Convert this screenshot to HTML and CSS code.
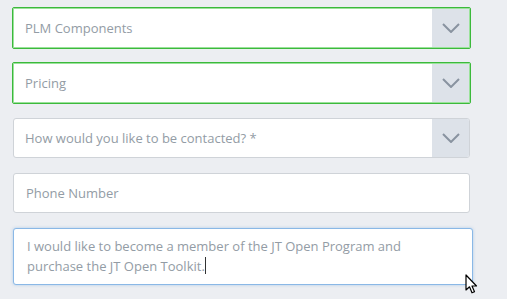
FILE: index.html
```html
<!DOCTYPE html>
<html lang="en">
<head>
    <meta charset="UTF-8">
    <meta name="viewport" content="width=device-width, initial-scale=1.0">
    <title>Contact Form</title>
    <link rel="stylesheet" href="styles.css">
</head>
<body>
    <form class="contact-form">
        <div class="field select-field valid">
            <span class="field-text">PLM Components</span>
            <span class="arrow">
                <svg width="18" height="10" viewBox="0 0 18 10"><path d="M1 1 L9 9 L17 1" fill="none" stroke="#8993a0" stroke-width="2"/></svg>
            </span>
        </div>
        <div class="field select-field valid">
            <span class="field-text">Pricing</span>
            <span class="arrow">
                <svg width="18" height="10" viewBox="0 0 18 10"><path d="M1 1 L9 9 L17 1" fill="none" stroke="#8993a0" stroke-width="2"/></svg>
            </span>
        </div>
        <div class="field select-field">
            <span class="field-text">How would you like to be contacted? *</span>
            <span class="arrow">
                <svg width="18" height="10" viewBox="0 0 18 10"><path d="M1 1 L9 9 L17 1" fill="none" stroke="#8993a0" stroke-width="2"/></svg>
            </span>
        </div>
        <div class="field input-field">
            <span class="field-text">Phone Number</span>
        </div>
        <div class="textarea-wrap">
            <div class="field textarea-field">
                <span class="field-text">I would like to become a member of the JT Open Program and purchase the JT Open Toolkit.<span class="caret"></span></span>
            </div>
            <svg class="cursor" width="14" height="21" viewBox="0 0 14 21"><path d="M1 1 L1 16 L4.5 12.8 L7 18.8 L9.5 17.8 L7 12 L11.5 12 Z" fill="#fff" stroke="#000" stroke-width="1.2" stroke-linejoin="round"/></svg>
        </div>
    </form>
</body>
</html>
```

FILE: styles.css
```css
/* Page */
html {
    background: #eceef2;
}

body {
    margin: 0;
    min-height: 299px;
    font-family: 'Open Sans', sans-serif;
    font-size: 13px;
    color: #939ca5;
}

.contact-form {
    display: flex;
    flex-direction: column;
    gap: 15px;
    padding: 8px 0 20px 13px;
    width: 457px;
}

/* Shared field box */
.field {
    display: flex;
    align-items: center;
    height: 40px;
    box-sizing: border-box;
    background: #fff;
    border: 1px solid #cfd3d8;
    border-radius: 3px;
    overflow: hidden;
}

.field-text {
    flex: 1;
    padding-left: 11px;
    white-space: nowrap;
}

/* Selects */
.arrow {
    width: 37px;
    height: 100%;
    background: #dde2e9;
    display: flex;
    align-items: center;
    justify-content: center;
}

.valid {
    border-color: #9be29b;
    border-radius: 1px;
    outline: 1px solid #3cb93c;
}

/* Text input */
.input-field .field-text {
    padding-left: 12px;
}

/* Textarea */
.textarea-wrap {
    position: relative;
}

.textarea-field {
    align-items: flex-start;
    height: 57px;
    width: 460px;
    border-color: #8ab8e6;
    box-shadow: 0 0 3px rgba(110, 165, 225, 0.5);
}

.textarea-field .field-text {
    white-space: normal;
    padding: 7px 40px 0 13px;
    line-height: 20px;
}

.caret {
    display: inline-block;
    width: 1px;
    height: 17px;
    background: #333;
    vertical-align: -3px;
}

.cursor {
    position: absolute;
    left: 452px;
    top: 46px;
}
```
